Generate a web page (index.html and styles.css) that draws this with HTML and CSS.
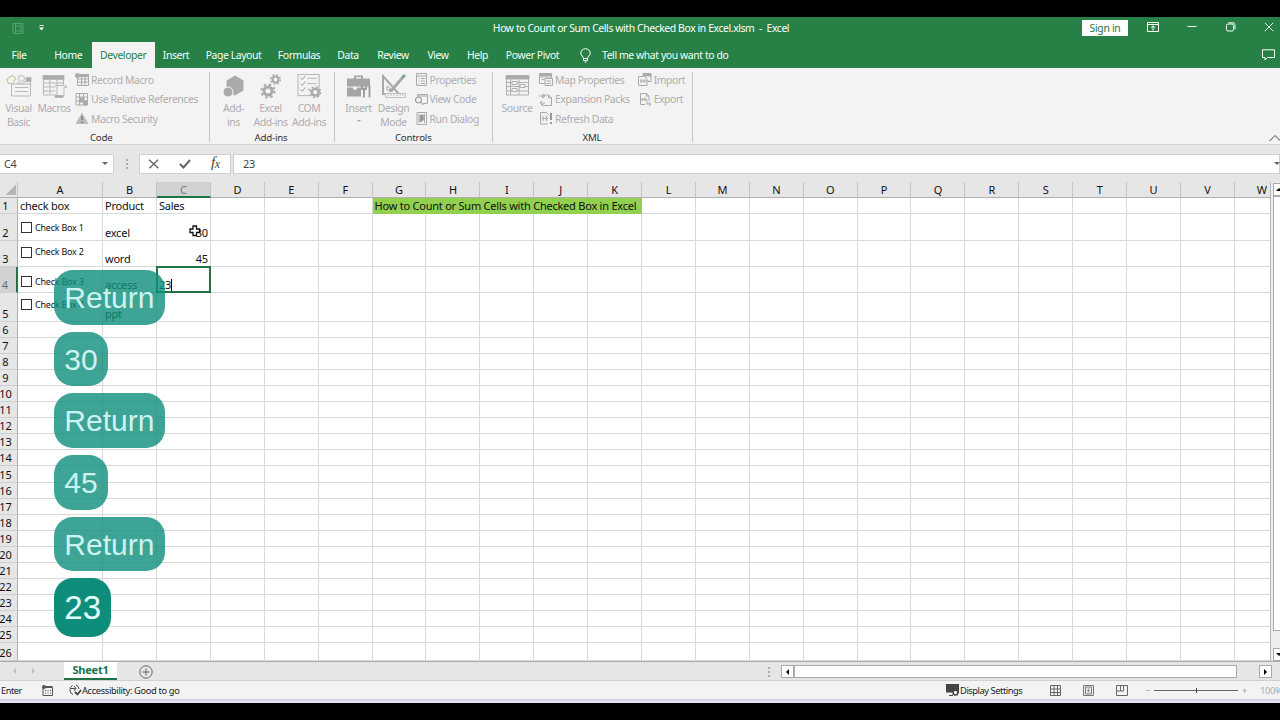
FILE: index.html
```html
<!DOCTYPE html>
<html lang="en">
<head>
<meta charset="UTF-8">
<meta name="viewport" content="width=device-width, initial-scale=1.0">
<title>How to Count or Sum Cells with Checked Box in Excel.xlsm - Excel</title>
<link rel="stylesheet" href="styles.css">
</head>
<body>
<div class="window">
    <header class="titlebar">
        <div class="quick">
            <svg width="12" height="13" viewBox="0 0 12 13" fill="none" stroke="#559f6c"><path d="M1 1.5h10v10H1zM3.5 1.5v10M9 1.5v10M3.5 4h5.5M3.5 9h5.500M0 3h1M0 6h1M0 9h1"/></svg>
            <svg width="5" height="6" viewBox="0 0 5 6"><path d="M.5.5h4" stroke="#fff"/><path d="M0 2.500h5L2.500 5.500z" fill="#fff"/></svg>
        </div>
        <div class="title">How to Count or Sum Cells with Checked Box in Excel.xlsm&nbsp; -&nbsp; Excel</div>
        <div class="account"><button class="signin">Sign in</button></div>
        <div class="controls">
            <svg width="12" height="10" viewBox="0 0 12 10" fill="none" stroke="#fff"><path d="M.5.5h11v9H.5zM.5 2.500h11M6 8.500V4M4 5.800l2-2 2 2"/></svg>
            <svg width="10" height="10" viewBox="0 0 10 10" fill="none" stroke="#fff"><path d="M.5 4.500h9"/></svg>
            <svg width="10" height="10" viewBox="0 0 10 10" fill="none" stroke="#fff"><rect x=".5" y="2" width="7" height="7" rx="1.500"/><path d="M2.500.8H7q2 0 2 2v4.500"/></svg>
            <svg width="10" height="10" viewBox="0 0 10 10" fill="none" stroke="#fff"><path d="M.8.8l8.400 8.400M9.200.8L.8 9.200"/></svg>
        </div>
    </header>

    <nav class="tabs">
        <span class="tab">File</span>
        <span class="tab tab-home">Home</span>
        <span class="tab active">Developer</span>
        <span class="tab">Insert</span>
        <span class="tab">Page Layout</span>
        <span class="tab">Formulas</span>
        <span class="tab">Data</span>
        <span class="tab">Review</span>
        <span class="tab">View</span>
        <span class="tab">Help</span>
        <span class="tab">Power Pivot</span>
        <span class="tellme">
            <svg width="11" height="15" viewBox="0 0 11 15" fill="none" stroke="#fff"><path d="M3.500 10.500c0-2-2.700-2.700-2.700-5.500a4.700 4.300 0 0 1 9.400 0c0 2.800-2.700 3.500-2.700 5.500zM3.500 10.500v2h4v-2M4.500 14h2"/></svg>
            Tell me what you want to do
        </span>
        <svg class="comment" width="13" height="12" viewBox="0 0 13 12" fill="none" stroke="#fff"><path d="M.5.800h12v7.700H5.500L3 11V8.500H.5z"/></svg>
    </nav>

    <section class="ribbon">
        <div class="group group-code">
            <div class="tools">
                <div class="big w37">
                    <svg width="26" height="24" viewBox="0 0 26 24" fill="none" stroke="#b9b7b9"><path d="M5.500 10v11.500h19V4H21M5.500 9.500h19M9 13h13M9 17h13"/><path d="M20 3h5v4h-5z" fill="#aaa"/><path d="M1 4.500L6 1l4 3-4 5.500-4-1z" fill="#f5f3df"/><circle cx="15.500" cy="4" r="3"/><path d="M11 8l5 1.500 4-3"/></svg>
                    <span>Visual<br>Basic</span>
                </div>
                <div class="big w34">
                    <svg width="26" height="24" viewBox="0 0 26 24" fill="none" stroke="#b9b7b9"><path d="M2.500 1.500h20v19h-20zM2.500 8.500h20M2.500 12.500h12M2.500 16.500h12M9 5v15M16 5v6"/><path d="M2 1h21v4H2z" fill="#aaa"/><path d="M14 11h10q2 0 1.500 2H23v7q0 3-3 3h-6q2-1 2-3V11" fill="#f5f4f5"/><path d="M14 21h8v2h-8z" fill="#aaa"/></svg>
                    <span>Macros</span>
                </div>
                <div class="smalls">
                    <div class="small"><svg width="14" height="13" viewBox="0 0 14 13" fill="none" stroke="#aaa"><path d="M2.500 2.500h11v10h-11zM2.500 6h11M2.500 9h11M6.500 3v9M10 3v9"/><path d="M5 1h9v3H5z" fill="#aaa" stroke="none"/><circle cx="2.500" cy="2.500" r="2.500" fill="#aaa" stroke="none"/></svg>Record Macro</div>
                    <div class="small"><svg width="14" height="13" viewBox="0 0 14 13" fill="none" stroke="#aaa"><path d="M1 .5h11.500v11.500H1zM1 4h11M1 8h11M4.500 1v11M8.500 1v11"/><path d="M5 5h4v4H5zM9 8h3v4H9z" fill="#aaa"/></svg>Use Relative References</div>
                    <div class="small"><svg width="14" height="13" viewBox="0 0 14 13"><path d="M7 .5L13.500 12H.5z" fill="#bbb"/><path d="M7 4v4M7 9.500v1.500" stroke="#777" stroke-width="1.400"/></svg>Macro Security</div>
                </div>
            </div>
            <div class="caption">Code</div>
        </div>

        <div class="group group-addins">
            <div class="tools">
                <div class="big w42">
                    <svg width="26" height="24" viewBox="0 0 26 24" fill="#aaa"><path d="M14 1l8.500 5v10L14 21 5.500 16V6z"/><circle cx="7" cy="17.500" r="5" stroke="#f4f3f4"/></svg>
                    <span>Add-<br>ins</span>
                </div>
                <div class="big w32">
                    <svg width="26" height="24" viewBox="0 0 26 24" fill="none" stroke="#aaa"><circle cx="10" cy="16.500" r="4" stroke-width="3"/><circle cx="10" cy="16.500" r="6.500" stroke-width="2.200" stroke-dasharray="2.500 2.600"/><circle cx="17.500" cy="5" r="3" stroke-width="2"/><circle cx="17.500" cy="5" r="4.800" stroke-width="1.500" stroke-dasharray="1.900 1.900"/></svg>
                    <span>Excel<br>Add-ins</span>
                </div>
                <div class="big w45">
                    <svg width="26" height="26" viewBox="0 0 26 26" fill="none" stroke="#b5b3b5"><path d="M1.500.5h22v22h-22zM11 4.500h10M11 10h10M11 16h4"/><path d="M4 4l2 2 3-4M4 10l2 2 3-4M4 16l2 2 3-4" stroke="#999"/><circle cx="19.500" cy="19" r="3.500" stroke="#aaa" stroke-width="2.500" fill="#f4f3f4"/><circle cx="19.500" cy="19" r="5.500" stroke="#aaa" stroke-width="1.500" stroke-dasharray="2.100 2.200"/></svg>
                    <span>COM<br>Add-ins</span>
                </div>
            </div>
            <div class="caption">Add-ins</div>
        </div>

        <div class="group group-controls">
            <div class="tools">
                <div class="big w34">
                    <svg width="26" height="24" viewBox="0 0 26 24" fill="#a5a5a5"><path d="M8 4V1h9v3h7v8H1V4zM10 4h5V2.500h-5zM1 13h6v2h4v-2h4v9H1z" fill-rule="evenodd"/><path d="M18 13v10M15.800 11v3q0 1 2.200 1t2.200-1v-3M23.500 11v6M23.500 17v6" stroke="#999" stroke-width="1.800" fill="none"/></svg>
                    <span>Insert<br><i class="down"></i></span>
                </div>
                <div class="big w36">
                    <svg width="26" height="25" viewBox="0 0 26 25" fill="none" stroke="#aaa"><path d="M2 2v18h16z" stroke-width="2"/><path d="M6 12v4h5z" fill="#f4f3f4"/><path d="M10 17L22 3" stroke-width="3"/><path d="M21 4l3-3" stroke="#7fa5a5" stroke-width="3"/><path d="M8.500 18l.5-3 2 2z" fill="#aaa"/><path d="M4.500 19.500h20v4h-20zM7 20v2M10 20v2M13 20v2M16 20v2M19 20v2M22 20v2" stroke="#c2c0c2" fill="#f4f3f4"/></svg>
                    <span>Design<br>Mode</span>
                </div>
                <div class="smalls">
                    <div class="small"><svg width="13" height="13" viewBox="0 0 13 13" fill="none" stroke="#aaa"><path d="M1.500.5h10v12h-10zM1.500 3h10M3.500 5.500h1M6 5.500h4M3.500 8h1M6 8h4M3.500 10.500h1M6 10.500h4"/></svg>Properties</div>
                    <div class="small"><svg width="13" height="13" viewBox="0 0 13 13" fill="none" stroke="#aaa"><path d="M2.500 3V1.500h10v9H8M2.500 3h10"/><circle cx="3.500" cy="7" r="3" stroke="#888"/><path d="M5.500 9l3 3" stroke="#888"/></svg>View Code</div>
                    <div class="small"><svg width="13" height="13" viewBox="0 0 13 13" fill="none" stroke="#aaa"><path d="M2 .5h9.500v12H2zM4 2v9M9.500 2v9"/><path d="M5 3h3.500v5L5 10z" fill="#999"/></svg>Run Dialog</div>
                </div>
            </div>
            <div class="caption">Controls</div>
        </div>

        <div class="group group-xml">
            <div class="tools">
                <div class="big w40">
                    <svg width="26" height="24" viewBox="0 0 26 24" fill="none" stroke="#b0aeb0"><path d="M2.500 1.500h22v19h-22zM2.500 8h22M2.500 12h22M2.500 16.500h22M6.500 5v15M15 5v15"/><path d="M2 1h23v3.500H2z" fill="#aaa"/><path d="M8 7h5v3H8zM8 14h5v3H8zM16 10h5v3h-5z" fill="#f4f3f4"/></svg>
                    <span>Source</span>
                </div>
                <div class="smalls">
                    <div class="small"><svg width="14" height="13" viewBox="0 0 14 13" fill="none" stroke="#aaa"><path d="M.5 1.500h12v9H.5zM.5 4h12M2.500 6.500h3"/><path d="M.5.5h12v2H.5z" fill="#aaa"/><path d="M6 5.500h7.500v7H6zM7.500 8h4.500M7.500 10.500h4.500" fill="#f4f3f4"/></svg>Map Properties</div>
                    <div class="small"><svg width="14" height="13" viewBox="0 0 14 13" fill="none" stroke="#aaa"><path d="M3.500 5V2h6l3 3v7.500h-9V11M9.500 2v3h3M0 3h6M4 1l2 2-2 2M6 10H1M3 8l-2 2 2 2"/></svg>Expansion Packs</div>
                    <div class="small"><svg width="14" height="13" viewBox="0 0 14 13" fill="none" stroke="#aaa"><path d="M9 12H1.500V.5h6L10 3M4 4v5M7.500 4v5M3 6.500h6"/><path d="M12 1v7M12 10v2" stroke="#999" stroke-width="2"/></svg>Refresh Data</div>
                </div>
                <div class="smalls smalls-io">
                    <div class="small"><svg width="14" height="13" viewBox="0 0 14 13" fill="none" stroke="#aaa"><path d="M5 3.500V.5h8v8h-3M.5 3.500h6L9 6v6.500H.5zM3 6v4M6 6v4M2 8h9"/><path d="M6 1h7v2H6z" fill="#aaa"/></svg>Import</div>
                    <div class="small"><svg width="14" height="13" viewBox="0 0 14 13" fill="none" stroke="#aaa"><path d="M7 11.500H2.500V.5h6L11 3v5M8.500.5V3H11M4 5v3M7 4v4M4 6.500h5M9 7v4h4M11 9l2 2-2 2"/></svg>Export</div>
                </div>
            </div>
            <div class="caption">XML</div>
        </div>
        <svg class="collapse" width="12" height="8" viewBox="0 0 12 8" fill="none" stroke="#444"><path d="M.5 7L6 1.500 11.500 7"/></svg>
    </section>

    <section class="formula">
        <div class="namebox"><span>C4</span><i class="down"></i></div>
        <div class="dots"><i></i><i></i><i></i></div>
        <div class="fx">
            <svg width="12" height="10" viewBox="0 0 12 10" fill="none" stroke="#666" stroke-width="1.500"><path d="M1 .8l9.500 8.400M10 .8L1.500 9.200"/></svg>
            <svg width="12" height="10" viewBox="0 0 12 10" fill="none" stroke="#666" stroke-width="2"><path d="M1 5l3.500 3.500L11 1"/></svg>
            <em>f<sub>x</sub></em>
        </div>
        <div class="input"><span>23</span><i class="down"></i></div>
    </section>

    <main class="sheet-area">
        <div class="sheet" id="sheet"></div>
        <div class="vscroll">
            <span class="arrow"><i class="up-arrow"></i></span>
            <span class="thumb"></span>
            <span class="arrow"><i class="down-arrow"></i></span>
        </div>
    </main>

    <section class="sheetbar">
        <div class="sheetnav"><i class="tri-left"></i><i class="tri-right"></i></div>
        <div class="sheettab">Sheet1</div>
        <svg class="add" width="14" height="14" viewBox="0 0 14 14" fill="none" stroke="#666"><circle cx="7" cy="7" r="6.200"/><path d="M7 3.500v7M3.500 7h7"/></svg>
        <div class="dots"><i></i><i></i><i></i></div>
        <div class="hscroll">
            <span class="arrow"><i class="tri-left"></i></span>
            <span class="bar"></span>
            <span class="arrow right"><i class="tri-right"></i></span>
        </div>
    </section>

    <footer class="status">
        <span class="mode">Enter</span>
        <svg class="rec" width="11" height="11" viewBox="0 0 11 11" fill="none" stroke="#555"><path d="M1 2.500h9.500v8H1zM3 5.500h1M5.500 5.500h1M8 5.500h1M3 8h1M5.500 8h1M8 8h1"/><path d="M1 2h9.500" stroke-width="2"/><circle cx="2" cy="2" r="2" fill="#555" stroke="none"/></svg>
        <svg width="14" height="12" viewBox="0 0 14 12" fill="none" stroke="#444"><path d="M4.500 1.500A5 5 0 0 0 5 10.500M8 1a5 5 0 0 1 3 4M2.500 4.500h5M6 2l2 2.500L6 7"/><path d="M7 8l2.500 2.500L13 6" stroke-width="1.800"/></svg>
        <span class="access">Accessibility: Good to go</span>
        <svg class="monitor" width="13" height="12" viewBox="0 0 13 12"><path d="M0 0h13v8.500H0zM3 11h4v1H3z" fill="#444"/><circle cx="9.500" cy="8.500" r="2.300" fill="#f3f3f3" stroke="#444" stroke-width="1.300"/><circle cx="9.500" cy="8.500" r="3.300" fill="none" stroke="#444" stroke-dasharray="1.300 1.200"/></svg>
        <span class="display">Display Settings</span>
        <div class="views">
            <svg width="11" height="11" viewBox="0 0 11 11" fill="none" stroke="#666"><path d="M.5.5h10v10H.5zM.5 4h10M.5 7.500h10M4 .5v10M7.500.5v10"/></svg>
            <svg width="11" height="11" viewBox="0 0 11 11" fill="none" stroke="#777"><path d="M.5.5h10v10H.5zM2.500 2h6v7h-6zM4.500 4h2M4.500 5.500h2M4.500 7h2"/></svg>
            <svg width="12" height="11" viewBox="0 0 12 11" fill="none" stroke="#666"><path d="M.5.5h11v10H.5zM4.500.5v5.500M7.500.5v5.500M.5 6h7"/></svg>
        </div>
        <div class="zoom"><span>−</span><div class="slider"><i></i></div><span>+</span></div>
        <span class="percent">100%</span>
    </footer>
</div>

<div class="keys">
    <span class="key">Return</span>
    <span class="key">30</span>
    <span class="key">Return</span>
    <span class="key">45</span>
    <span class="key">Return</span>
    <span class="key current">23</span>
</div>

<svg class="cursor" width="12" height="12" viewBox="0 0 12 12"><path d="M4 1h3.500v3h3v3.500h-3v3H4v-3H1V4h3z" fill="#fff" stroke="#111" stroke-width="1.300"/></svg>

<script>
const columns = 'ABCDEFGHIJKLMNOPQRSTUVW'.split('');
const cells = {
    A1: 'check box', B1: 'Product', C1: 'Sales',
    B2: 'excel', C2: '30',
    B3: 'word', C3: '45',
    B4: 'access', C4: '23',
    B5: 'ppt',
    G1: 'How to Count or Sum Cells with Checked Box in Excel'
};
const sheet = document.getElementById('sheet');

function addCell(className, text) {
    const cell = document.createElement('div');
    cell.className = className;
    if (text) {
        const span = document.createElement('span');
        span.innerText = text;
        cell.appendChild(span);
    }
    sheet.appendChild(cell);
    return cell;
}

// column letters
addCell('head corner');
columns.forEach(col => addCell('head' + (col === 'C' ? ' selected' : ''), col));

for (let row = 1; row <= 26; row++) {
    addCell('rowhead' + (row === 4 ? ' selected' : ''), String(row));
    columns.forEach(col => {
        const id = col + row;
        let name = 'cell';
        if (id === 'C2' || id === 'C3') name += ' number';
        if (id === 'C4') name += ' editing';
        if (row === 1 && 'GHIJK'.includes(col)) name += ' green';
        // form controls sit in column A
        if (col === 'A' && row > 1 && row < 6) {
            const box = addCell('cell check check' + row, 'Check Box ' + (row - 1));
            box.prepend(document.createElement('i'));
        } else {
            addCell(name, cells[id]);
        }
    });
}
</script>
</body>
</html>
```
FILE: styles.css
```css
* {
    box-sizing: border-box;
}

body {
    margin: 0;
    width: 1280px;
    height: 720px;
    overflow: hidden;
    background: #000;
    font-family: "Noto Sans", "Open Sans", sans-serif;
    font-size: 10.4px;
    letter-spacing: -0.4px;
    color: #222;
}

svg {
    display: block;
    flex: none;
}

.window {
    width: 1280px;
    height: 720px;
    padding: 17px 0;
    display: flex;
    flex-direction: column;
    white-space: nowrap;
}

/* title bar */
.titlebar {
    height: 25px;
    display: grid;
    grid-template-columns: 400px 482px 246px 152px;
    background: #278147;
    color: #fff;
}

.quick {
    display: flex;
    align-items: center;
    gap: 15px;
    padding: 0 0 3px 12px;
}

.title {
    text-align: center;
    line-height: 22px;
}

.account {
    display: flex;
    justify-content: flex-end;
}

.signin {
    width: 46px;
    height: 16px;
    margin-top: 3px;
    padding: 0;
    border: 0;
    background: #fff;
    color: #2a7246;
    font: inherit;
    letter-spacing: -0.3px;
    line-height: 16px;
}

.controls {
    display: flex;
    justify-content: space-between;
    padding: 5px 6px 0 19px;
}

/* ribbon tabs */
.tabs {
    height: 26px;
    display: grid;
    grid-template-columns: 38px 53.500px 63.500px 42px 73px 58px 40px 50px 40px 39px 71px 1fr 18px;
    background: #278147;
    color: #f4fff7;
    line-height: 26px;
}

.tab {
    text-align: center;
}

.tab-home {
    padding-left: 7px;
}

.tab.active {
    background: #f4f3f4;
    color: #278147;
}

.tellme {
    display: flex;
    align-items: center;
    gap: 11px;
    padding-left: 12px;
}

.comment {
    margin-top: 7px;
}

/* ribbon */
.ribbon {
    height: 77px;
    display: flex;
    background: #f4f3f4;
    border-bottom: 1px solid #d4d2d4;
    color: #aeacae;
}

.group {
    padding-top: 2px;
    display: flex;
    flex-direction: column;
    background: linear-gradient(#c5c4c5, #c5c4c5) right 4px / 1px 70px no-repeat;
}

.group-code { width: 209.500px; padding-right: 7px; }
.group-addins { width: 125px; padding: 2px 5px 0 3px; }
.group-controls { width: 158.500px; padding: 2px 8px 0 7px; }
.group-xml { width: 200px; padding: 2px 6px 0 4px; }

.tools {
    display: flex;
    height: 59px;
}

.big {
    flex: none;
    display: flex;
    flex-direction: column;
    align-items: center;
    padding-top: 4px;
    line-height: 14px;
    text-align: center;
}

.big svg {
    height: 25px;
    margin-bottom: 2px;
}

.w32 { width: 32px; }
.w34 { width: 34px; }
.w36 { width: 36px; }
.w37 { width: 37px; }
.w40 { width: 40px; }
.w42 { width: 42px; }
.w45 { width: 45px; }

.smalls {
    padding-left: 4px;
}

.group-controls .smalls {
    padding-left: 3px;
}

.group-xml .smalls {
    padding-left: 2px;
}

.group-xml .smalls-io {
    padding-left: 8px;
}

.small {
    height: 19.500px;
    display: flex;
    align-items: center;
    gap: 2px;
}

.caption {
    height: 16px;
    line-height: 18px;
    font-size: 9.700px;
    letter-spacing: -0.2px;
    text-align: center;
    color: #333;
}

.collapse {
    margin: 66px -1px 0 auto;
}

.down {
    display: inline-block;
    border: 3px solid transparent;
    border-top-color: #666;
    border-bottom: 0;
}

.big .down {
    border-width: 2px 2px 0;
    border-top-color: #aaa;
    vertical-align: 4px;
}

/* formula bar */
.formula {
    height: 37px;
    padding-top: 9px;
    display: flex;
    align-items: flex-start;
    background: #e6e6e6;
}

.namebox,
.fx,
.input {
    height: 20px;
    display: flex;
    align-items: center;
    background: #fff;
    border: 1px solid #d0d0d0;
    font-size: 10.800px;
    letter-spacing: -0.2px;
    color: #444;
}

.namebox {
    width: 114px;
    border-left: 0;
    padding: 0 5px 1px 4px;
    justify-content: space-between;
}

.dots {
    width: 25px;
    height: 20px;
    display: flex;
    flex-direction: column;
    align-items: center;
    justify-content: center;
    gap: 2px;
}

.dots i {
    width: 2px;
    height: 2px;
    background: #aaa;
}

.fx {
    width: 92px;
    padding: 0 10px 1px 8px;
    justify-content: space-between;
}

.fx em {
    font-family: "Liberation Serif", serif;
    font-size: 15px;
    line-height: 15px;
}

.fx sub {
    font-size: 12px;
    vertical-align: -1px;
}

.input {
    flex: 1;
    margin-left: 2px;
    padding: 0 0 1px 9px;
    justify-content: space-between;
}

.input .down {
    margin-right: -1px;
}

/* sheet */
.sheet-area {
    height: 479px;
    display: flex;
    background: #e6e6e6;
}

.sheet {
    width: 1271px;
    height: 479px;
    overflow: hidden;
    display: grid;
    grid-template-columns: 18px 85px 54px repeat(21, 53.900px);
    grid-template-rows: 15.500px 16.500px 26.500px 26.300px 26.700px 28.300px repeat(20, 16.090px) 18px;
    background: #fff;
    border-right: 1px solid #b5b5b5;
    font-size: 11px;
    letter-spacing: -0.23px;
    color: #111;
}

.head,
.rowhead {
    background: #e6e6e6;
    text-align: center;
}

.head {
    line-height: 15px;
    border-right: 1px solid #c4c4c4;
    border-bottom: 1px solid #b0b0b0;
}

.head:nth-child(24) {
    border-right: 0;
}

.rowhead {
    display: flex;
    align-items: flex-end;
    justify-content: center;
    padding-right: 6px;
    border-right: 1px solid #b0b0b0;
    border-bottom: 1px solid #cfcfcf;
    line-height: 14px;
    letter-spacing: 0;
}

.corner {
    background: linear-gradient(135deg, transparent 50%, #b5b5b5 51%) 5px 2px / 11px 11px no-repeat #e6e6e6;
}

.head.selected {
    background: #d2d2d2;
    border-bottom: 2px solid #217346;
    color: #6b7f73;
}

.rowhead.selected {
    background: #d2d2d2;
    border-right: 2px solid #217346;
    color: #4c7a60;
}

.cell {
    display: flex;
    align-items: flex-end;
    padding: 0 2px;
    border-right: 1px solid #d9d9d9;
    border-bottom: 1px solid #d9d9d9;
    line-height: 14px;
    min-width: 0;
}

.cell span {
    flex: none;
}

.number {
    justify-content: flex-end;
}

.editing {
    margin: -1px 0 0 -1px;
    border: 2px solid #217346;
    padding: 0 1px;
    line-height: 12px;
}

.editing span {
    border-right: 1px solid #000;
}

.green {
    background: #92d050;
    border-color: #92d050;
}

/* long text runs over the next cells */
.green span {
    position: relative;
    z-index: 1;
}

.check {
    align-items: center;
    gap: 3px;
    padding: 0 0 0 3px;
    font-size: 9px;
}

.check i {
    width: 11px;
    height: 11px;
    border: 1px solid #333;
    background: #fff;
}

.check2 { padding-top: 2px; }
.check3 { padding-bottom: 2px; }
.check4 { padding-top: 4px; }
.check5 { padding-bottom: 5px; }

.vscroll {
    width: 9px;
    padding: 1px 0 0 2px;
    display: flex;
    flex-direction: column;
    background: #eee;
}

.vscroll .arrow {
    height: 13px;
    width: 13px;
    background: #fff;
    border: 1px solid #aaa;
    padding: 4px 0 0 2px;
}

.vscroll .thumb {
    height: 437px;
    width: 13px;
    margin-bottom: 17px;
    background: #fff;
    border: 1px solid #aaa;
}

.up-arrow,
.down-arrow {
    display: block;
    width: 0;
    border: 3.500px solid transparent;
}

.up-arrow { border-bottom-color: #000; border-top: 0; }
.down-arrow { border-top-color: #000; border-bottom: 0; }

/* sheet tabs */
.sheetbar {
    height: 20px;
    display: flex;
    background: #e6e6e6;
    border-top: 1px solid #ababab;
    border-bottom: 1px solid #d0d0d0;
}

.sheetnav {
    width: 64px;
    padding: 6px 0 0 13px;
    display: flex;
    gap: 16px;
}

.tri-left,
.tri-right {
    height: 0;
    border: 3.500px solid transparent;
}

.tri-left { border-right-color: #000; border-left: 0; }
.tri-right { border-left-color: #000; border-right: 0; }
.sheetnav .tri-left { border-right-color: #c0c0c0; }
.sheetnav .tri-right { border-left-color: #c0c0c0; }

.sheettab {
    width: 53px;
    height: 18px;
    background: #fff;
    border-bottom: 2px solid #217346;
    color: #217346;
    font-size: 11px;
    font-weight: bold;
    letter-spacing: -0.2px;
    text-align: center;
    line-height: 15px;
}

.add {
    margin: 3px 0 0 22px;
}

.sheetbar .dots {
    margin-left: auto;
}

.hscroll {
    width: 491px;
    height: 13px;
    margin: 3px 8px 0 0;
    display: flex;
}

.hscroll .arrow {
    width: 13px;
    border: 1px solid #aaa;
    background: #fff;
    display: flex;
    align-items: center;
    justify-content: center;
}

.bar {
    width: 443px;
    background: #fff;
    border: 1px solid #aaa;
}

.hscroll .right {
    margin-left: auto;
}

/* status bar */
.status {
    height: 22px;
    padding-bottom: 4px;
    display: flex;
    align-items: center;
    background: linear-gradient(#f3f3f3 18px, #c9c6d4 18px, #e4e0f0 20px);
    font-size: 9.300px;
    letter-spacing: -0.35px;
}

.mode {
    width: 42px;
    padding-left: 1px;
    letter-spacing: -0.5px;
}

.rec {
    margin-right: 15px;
}

.monitor {
    margin-left: auto;
}

.access,
.display {
    flex: none;
}

.display {
    width: 91px;
    padding-left: 1px;
    letter-spacing: -0.45px;
}

.views {
    display: flex;
    gap: 22px;
}

.zoom {
    display: flex;
    align-items: center;
    margin-left: 17px;
    gap: 4px;
    color: #999;
}

.slider {
    width: 84px;
    height: 1px;
    background: #666;
}

.slider i {
    display: block;
    width: 1px;
    height: 5px;
    margin: -2px auto 0;
    background: #444;
}

.percent {
    width: 20px;
    margin-left: 13px;
    overflow: hidden;
    color: #aaa;
}

/* pressed keys shown over the sheet */
.keys {
    position: absolute;
    left: 54px;
    top: 270px;
    display: flex;
    flex-direction: column;
    align-items: flex-start;
    gap: 7px;
    font-family: "Liberation Sans", Arial, sans-serif;
    font-size: 30px;
    letter-spacing: 0;
}

.key {
    height: 54.700px;
    padding: 0 10.300px;
    border-radius: 19px;
    background: rgba(14, 141, 122, 0.8);
    color: #cdf3f0;
    line-height: 56px;
}

.key.current {
    height: 59px;
    background: #0e8d7a;
    color: #e4ffff;
    font-size: 33px;
    line-height: 60px;
}

.cursor {
    position: absolute;
    left: 189px;
    top: 225px;
}
```
